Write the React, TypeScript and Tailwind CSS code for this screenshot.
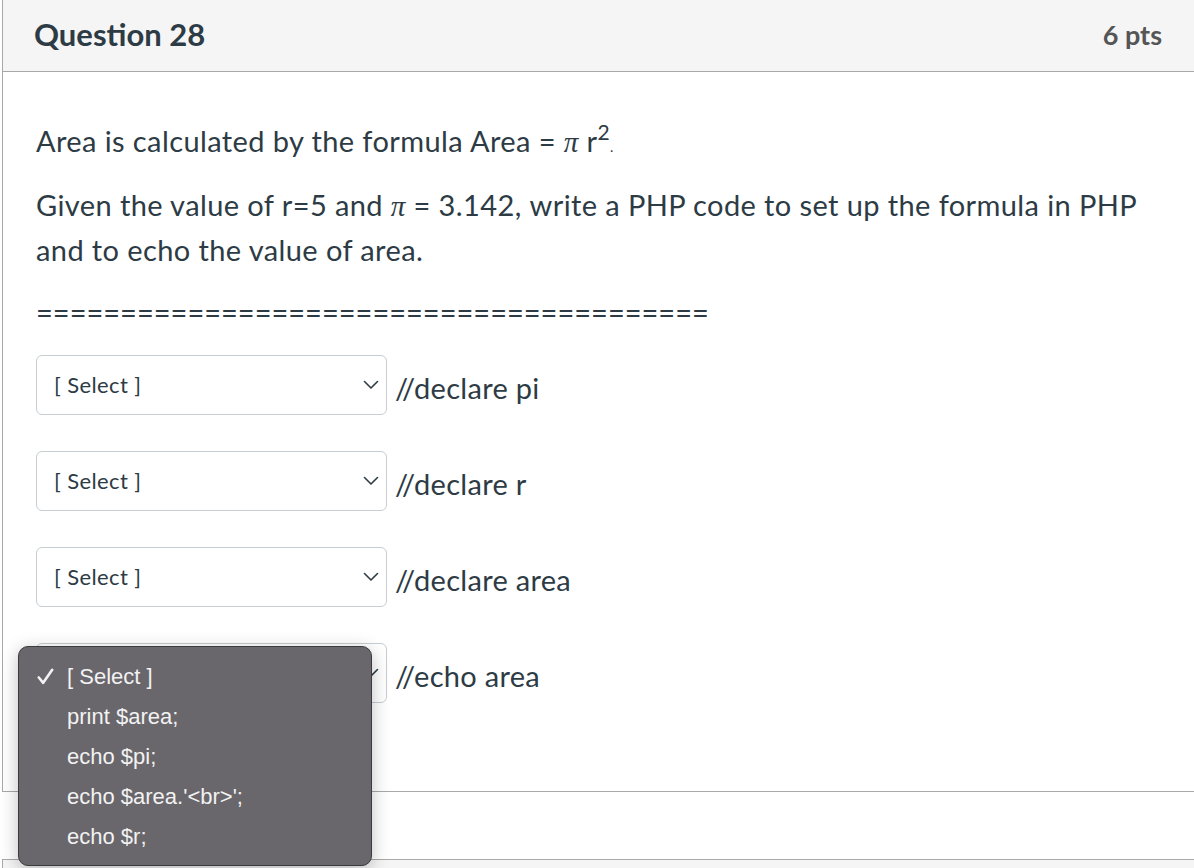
import React from 'react';

const lato = "font-['Lato','Noto_Sans',sans-serif]";

const rows = ['//declare pi', '//declare r', '//declare area', '//echo area'];
const options = ['[ Select ]', 'print $area;', 'echo $pi;', "echo $area.'<br>';", 'echo $r;'];

const Chevron: React.FC = () => (
    <svg width="16" height="10" viewBox="0 0 16 10" fill="none" className="shrink-0">
        <path d="M1.5 1.5 L8 8 L14.5 1.5" stroke="#2d3b45" strokeWidth="1.6" strokeLinecap="round" strokeLinejoin="round" />
    </svg>
);

const Check: React.FC = () => (
    <svg width="17" height="17" viewBox="0 0 17 17" fill="none">
        <path d="M1.8 9.5 L6.2 14.8 L15.2 1.8" stroke="#f2f2f2" strokeWidth="2.6" strokeLinecap="round" strokeLinejoin="round" />
    </svg>
);

const SelectRow: React.FC<{ label: string }> = ({ label }) => (
    <div className="flex items-center h-[60px]">
        <div className="w-[351px] h-[60px] border border-[#c7cdd1] rounded-[6px] bg-white flex items-center justify-between pl-[17px] pr-[7px]">
            <span className="text-[22px] leading-none text-[#2d3b45]">[ Select ]</span>
            <Chevron />
        </div>
        <span className="ml-[8px] mt-[6px] text-[29px] leading-[44px] tracking-[0.3px] text-[#2d3b45]">{label}</span>
    </div>
);

const OptionsMenu: React.FC = () => (
    <div className="absolute left-[18px] top-[646px] w-[354px] h-[220px] rounded-[10px] bg-[#69666c] border border-[#3b3a3d] shadow-[0_4px_18px_rgba(0,0,0,0.25)] pt-[9px] font-['Liberation_Sans',Arial,sans-serif]">
        {options.map((o, i) => (
            <div key={o} className="h-[40px] flex items-center text-[22px] text-[#f2f2f2]">
                <span className="w-[48px] pl-[18px] flex items-center">{i === 0 ? <Check /> : null}</span>
                <span>{o}</span>
            </div>
        ))}
    </div>
);

export default function App() {
    return (
        <div className={`relative w-[1194px] h-[868px] overflow-hidden bg-white ${lato}`}>
            {/* question card */}
            <div className="ml-[2px] border-l border-b border-[#a8a8a8]">
                <div className="h-[72px] bg-[#f5f5f5] border-b border-[#a8a8a8] flex items-center justify-between pl-[31px] pr-[32px]">
                    <h2 className="text-[31px] font-bold text-[#2d3b45] -mt-[2px]">Question 28</h2>
                    <span className="text-[27px] font-bold text-[#555555] -mt-[1px]">6 pts</span>
                </div>
                <div className="pl-[33px] pt-[47px] pb-[88px] text-[29px] leading-[44px] text-[#2d3b45] tracking-[0.4px]">
                    <p>
                        Area is calculated by the formula Area = <span className="font-['Liberation_Serif',serif] italic">π</span> r
                        <span className="relative -top-[12px] text-[21px] leading-none">2</span>
                        <span className="text-[14px] leading-none">.</span>
                    </p>
                    <p className="mt-[19px] max-w-[1115px]">
                        Given the value of r=5 and <span className="font-['Liberation_Serif',serif] italic">π</span> = 3.142, write a PHP code to set up the formula in PHP and to echo the value of area.
                    </p>
                    <p className="mt-[18px] tracking-normal">{'='.repeat(40)}</p>
                    <div className="mt-[21px] flex flex-col gap-[36px]">
                        {rows.map((r) => (
                            <SelectRow key={r} label={r} />
                        ))}
                    </div>
                </div>
            </div>
            {/* next card edge */}
            <div className="mt-[67px] ml-[2px] h-[20px] border-l border-t border-[#a8a8a8] bg-[#f5f5f5]" />
            <OptionsMenu />
        </div>
    );
}
